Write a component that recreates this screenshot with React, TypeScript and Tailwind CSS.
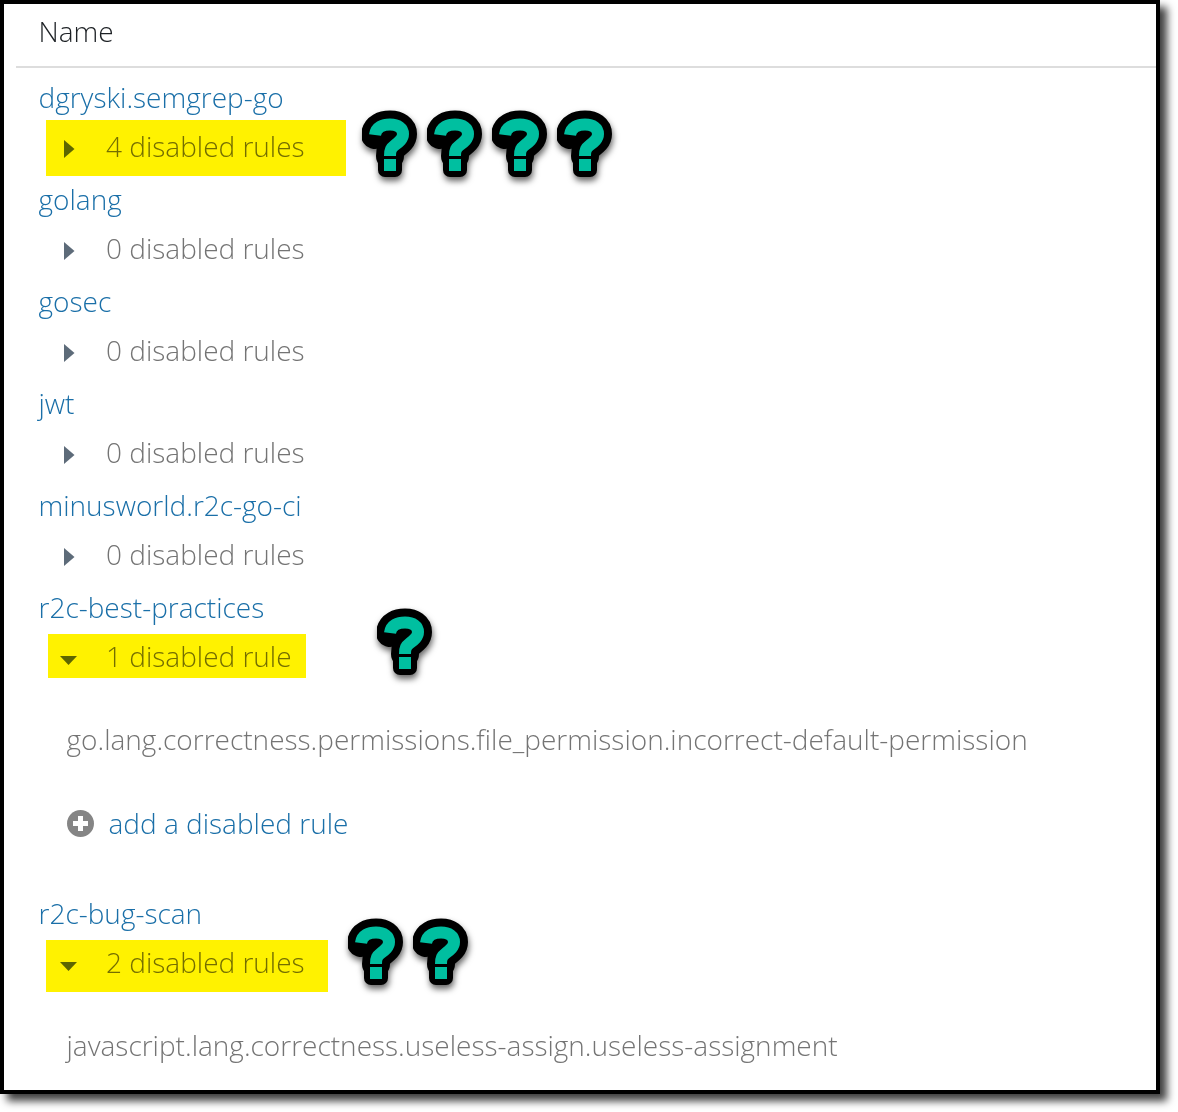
const hook = "M13 26 C14 18 21 15.5 28 15.5 C36 15.5 41 19 41 25 C41 30 37 33 33 36 C29 39 28 41 28 47";

const Question = () => (
  <svg
    width="56"
    height="72"
    viewBox="0 0 56 72"
    className="block shrink-0 drop-shadow-[1px_4px_3px_rgba(0,0,0,0.6)]"
  >
    <path d={hook} fill="none" stroke="#000" strokeWidth="28" strokeLinecap="round" />
    <rect x="16" y="40" width="24" height="28" rx="7" fill="#000" />
    <path d={hook} fill="none" stroke="#00bfa0" strokeWidth="12" />
    <rect x="22" y="50" width="12" height="12" fill="#00bfa0" />
  </svg>
);

const Caret = ({ open }: { open?: boolean }) => (
  <svg width="18" height="18" viewBox="0 0 18 18" className="block shrink-0 text-[#5d6b79]">
    {open ? <path d="M0 6 H17 L8.5 15 Z" fill="currentColor" /> : <path d="M4 0 L14.5 9 L4 18 Z" fill="currentColor" />}
  </svg>
);

const PlusCircle = () => (
  <svg width="27" height="27" viewBox="0 0 27 27" className="block shrink-0">
    <circle cx="13.5" cy="13.5" r="13.5" fill="#858585" />
    <path d="M13.5 6 V21 M6 13.5 H21" stroke="#fff" strokeWidth="5" />
  </svg>
);

type GroupProps = {
  name: string;
  count: string;
  open?: boolean;
  highlight?: string;
  questions?: number;
  questionsAt?: string;
  children?: React.ReactNode;
};

const Group = ({ name, count, open, highlight, questions = 0, questionsAt, children }: GroupProps) => (
  <div>
    <div className="h-[46px] pl-[34.5px] text-[28px] leading-[44px] font-light text-[#1a6fa8]">{name}</div>
    <div className="relative flex h-[56px] items-center pl-[56px] text-[28px] font-light text-[#747474]">
      <Caret open={open} />
      <span className="mb-[7px] ml-[28px]">{count}</span>
      {highlight && <div className={`absolute bg-[#fff200] mix-blend-multiply ${highlight}`} />}
      {questions > 0 && (
        <div className={`absolute flex gap-[9px] ${questionsAt}`}>
          {Array.from({ length: questions }, (_, i) => (
            <Question key={i} />
          ))}
        </div>
      )}
    </div>
    {children}
  </div>
);

const Rule = ({ children }: { children: React.ReactNode }) => (
  <div className="pt-[29px] pl-[62.5px] text-[28px] leading-[46px] font-light text-[#747474]">{children}</div>
);

export default function App() {
  return (
    <div className="h-[1112px] w-[1178px] bg-white font-['Open_Sans',sans-serif]">
      <div className="h-[1094px] w-[1160px] overflow-hidden border-4 border-black bg-white shadow-[7px_7px_8px_rgba(0,0,0,0.75)]">
        <div className="ml-3 flex h-[64px] items-center border-b-2 border-[#ddd] pb-[8px] pl-[22.5px] text-[28px] font-light text-[#1d2125]">
          Name
        </div>
        <div className="pt-[7px]">
          <Group
            name="dgryski.semgrep-go"
            count="4 disabled rules"
            highlight="left-[42px] top-[-1px] h-[56px] w-[300px]"
            questions={4}
            questionsAt="left-[358px] top-[-12px]"
          />
          <Group name="golang" count="0 disabled rules" />
          <Group name="gosec" count="0 disabled rules" />
          <Group name="jwt" count="0 disabled rules" />
          <Group name="minusworld.r2c-go-ci" count="0 disabled rules" />
          <Group
            name="r2c-best-practices"
            count="1 disabled rule"
            open
            highlight="left-[44px] top-[3px] h-[44px] w-[258px]"
            questions={1}
            questionsAt="left-[373px] top-[-24px]"
          >
            <Rule>go.lang.correctness.permissions.file_permission.incorrect-default-permission</Rule>
            <div className="mt-[38px] mb-[45px] flex h-[46px] items-center pl-[62.5px] text-[28px] font-light text-[#1a6fa8]">
              <PlusCircle />
              <span className="ml-[15px]">add a disabled rule</span>
            </div>
          </Group>
          <Group
            name="r2c-bug-scan"
            count="2 disabled rules"
            open
            highlight="left-[42px] top-[3px] h-[52px] w-[282px]"
            questions={2}
            questionsAt="left-[344px] top-[-20px]"
          >
            <Rule>javascript.lang.correctness.useless-assign.useless-assignment</Rule>
          </Group>
        </div>
      </div>
    </div>
  );
}
